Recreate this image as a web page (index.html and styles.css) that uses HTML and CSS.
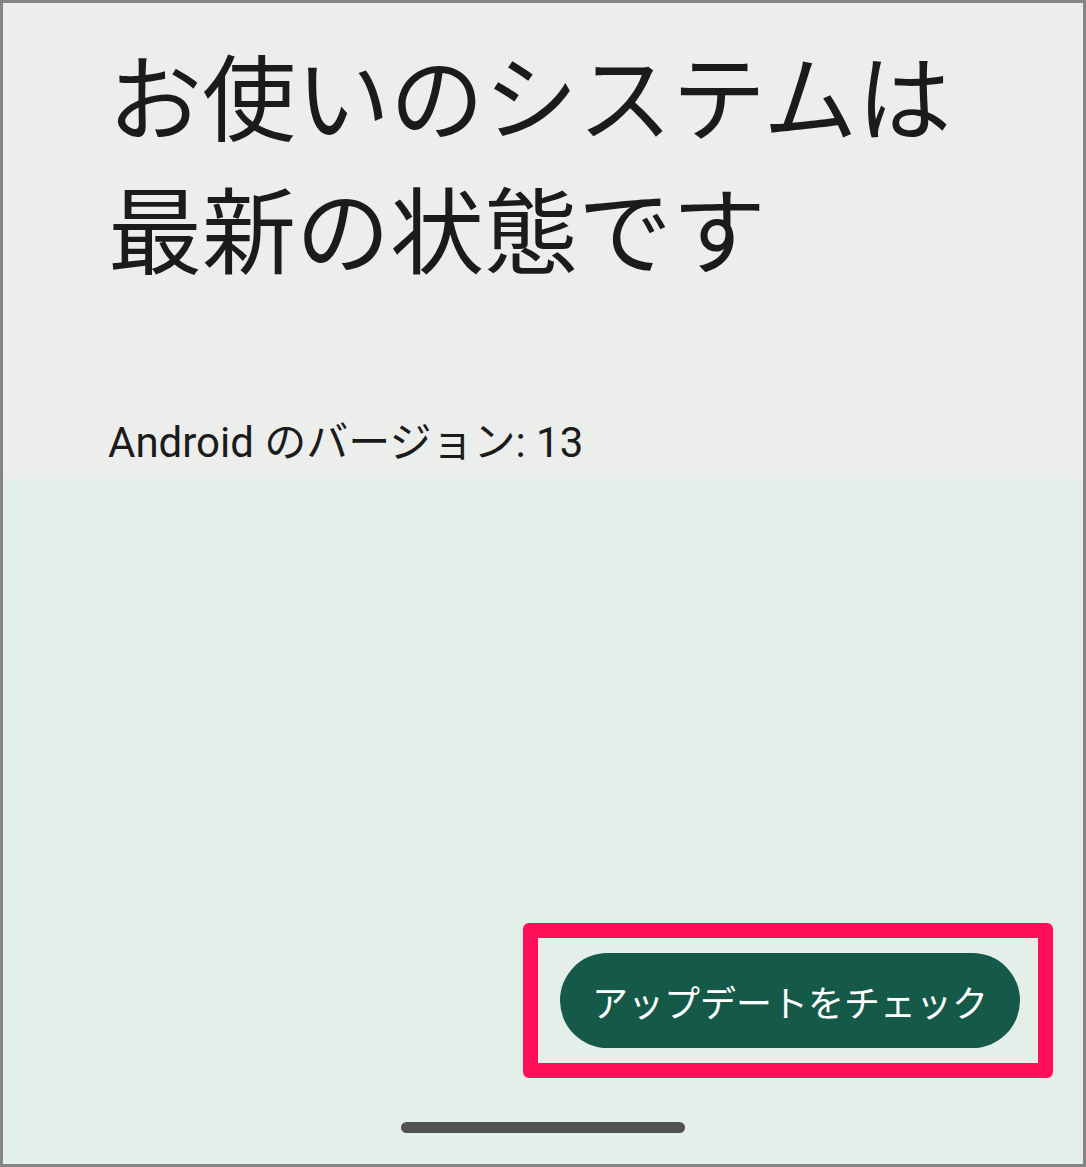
FILE: index.html
```html
<!DOCTYPE html>
<html lang="ja">
<head>
<meta charset="utf-8">
<title>システムアップデート</title>
<link rel="stylesheet" href="styles.css">
</head>
<body>
<div class="frame">
  <section class="top">
    <h1 class="title">お使いのシステムは<br>最新の状態です</h1>
    <p class="version">Android のバージョン: 13</p>
  </section>
  <section class="bottom">
    <div class="actions">
      <div class="highlight">
        <button class="check-btn" type="button">アップデートをチェック</button>
      </div>
    </div>
    <div class="home-bar"></div>
  </section>
</div>
</body>
</html>
```

FILE: styles.css
```css
html, body {
  margin: 0;
  padding: 0;
}
body {
  width: 1086px;
  height: 1167px;
  font-family: Roboto, "Noto Sans CJK JP", sans-serif;
}
.frame {
  box-sizing: border-box;
  width: 1086px;
  height: 1167px;
  border: 3px solid #858585;
  display: flex;
  flex-direction: column;
  background: #e5efe9;
}
.top {
  height: 476px;
  flex: none;
  background: #eceeeb;
  padding-left: 105px;
  box-sizing: border-box;
  display: flex;
  flex-direction: column;
}
.title {
  margin: 24px 0 0;
  font-family: "Noto Sans CJK JP", sans-serif;
  font-weight: 400;
  font-size: 94px;
  line-height: 133px;
  color: #1b1b1b;
  letter-spacing: 0;
}
.version {
  margin: 125px 0 0;
  font-size: 42px;
  line-height: 50px;
  color: #1b1b1b;
}
.bottom {
  flex: 1;
  display: flex;
  flex-direction: column;
  align-items: stretch;
}
.actions {
  margin-top: auto;
  display: flex;
  justify-content: flex-end;
  padding-right: 30px;
}
.highlight {
  border: 15px solid #ff0f58;
  border-radius: 6px;
  padding: 15px 18px 15px 22px;
}
.check-btn {
  display: block;
  width: 460px;
  height: 95px;
  border: none;
  border-radius: 48px;
  background: #155a48;
  color: #ffffff;
  font-family: "Noto Sans CJK JP", sans-serif;
  font-size: 36px;
  font-weight: 400;
  padding: 0;
  letter-spacing: 0;
}
.home-bar {
  align-self: center;
  width: 284px;
  height: 11px;
  border-radius: 6px;
  background: #525252;
  margin: 44px 0 31px;
}
```
